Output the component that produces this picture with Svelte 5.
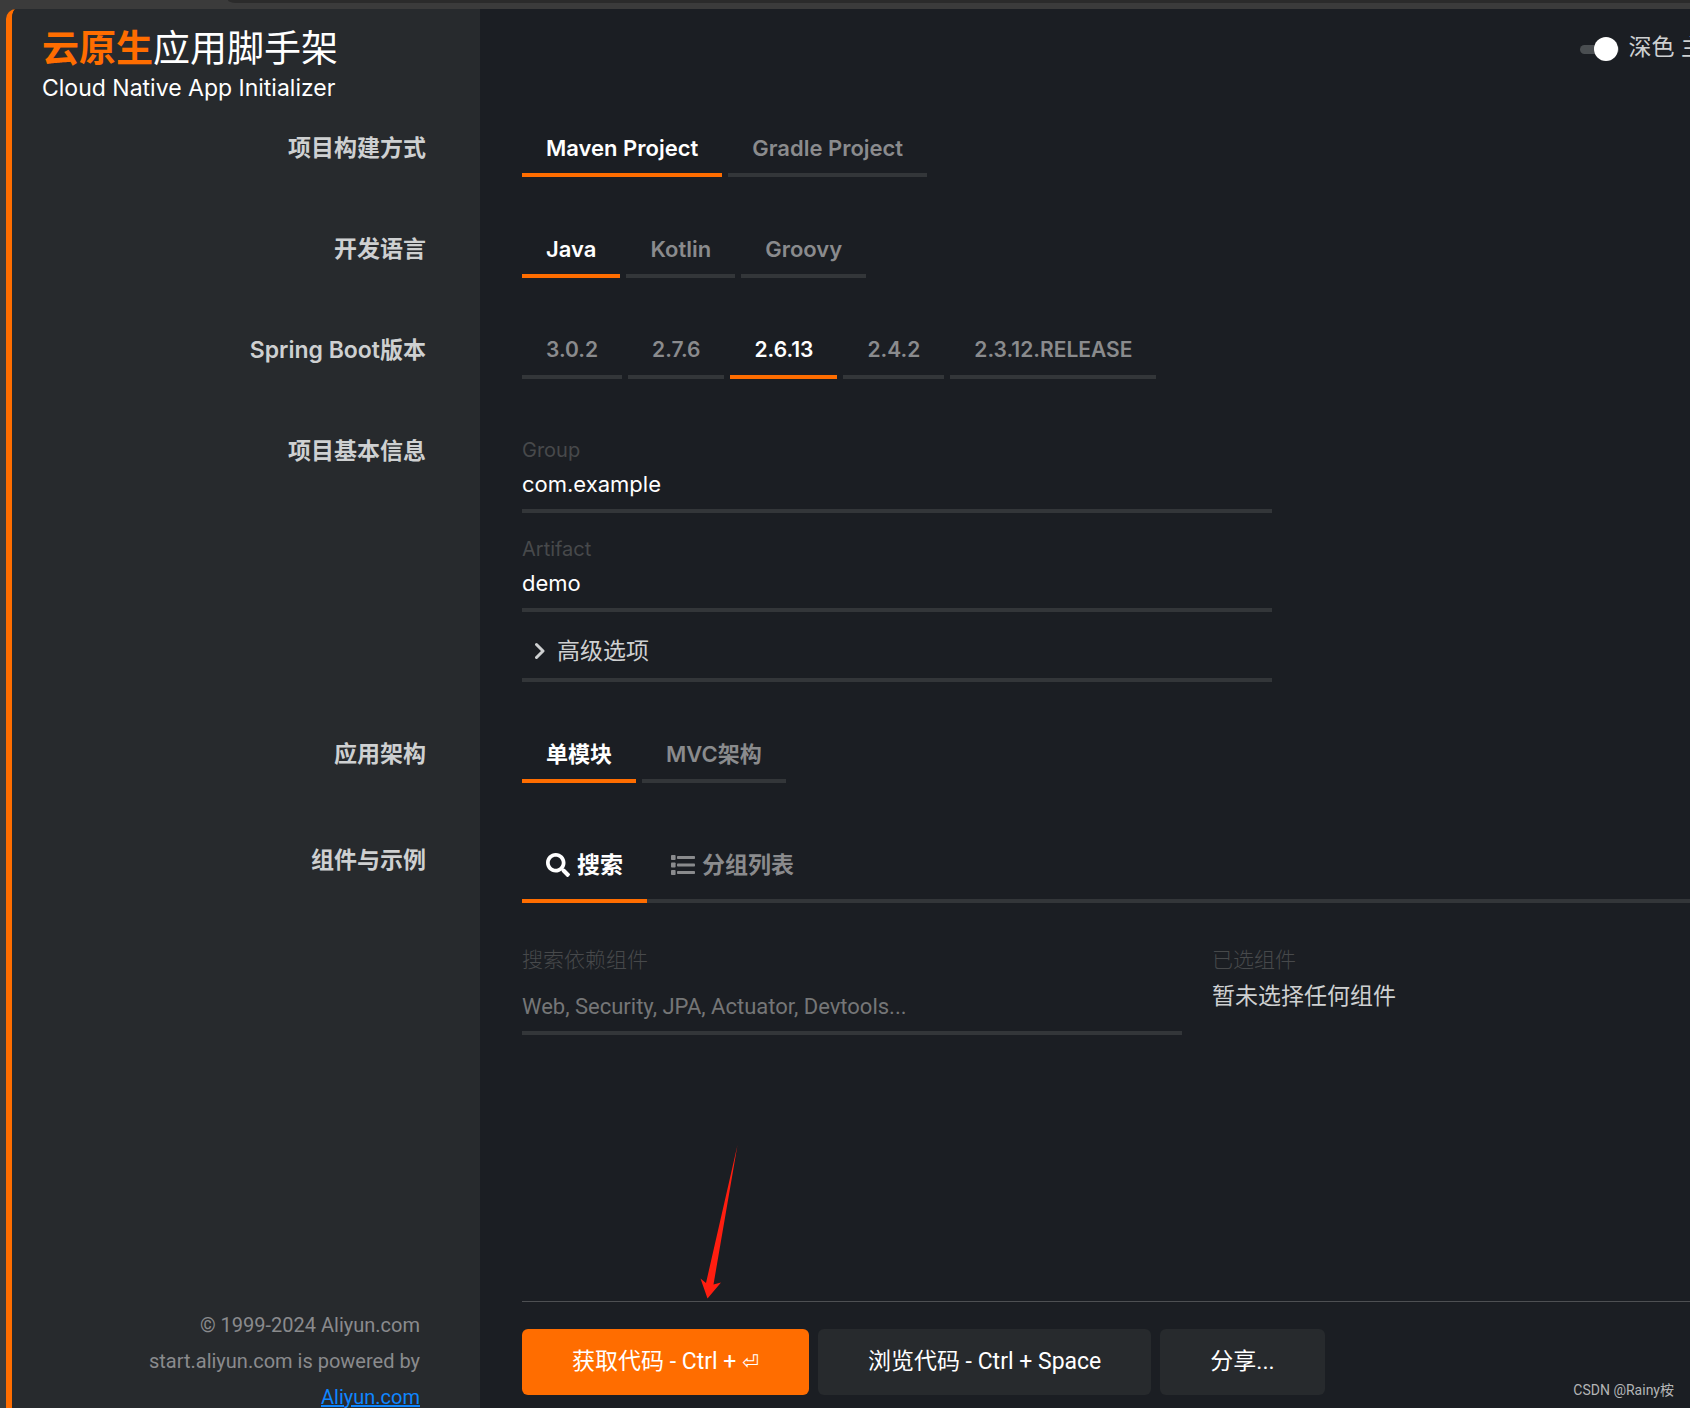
<script lang="ts">
	const projectTypes = ['Maven Project', 'Gradle Project'];
	const languages = ['Java', 'Kotlin', 'Groovy'];
	const versions = ['3.0.2', '2.7.6', '2.6.13', '2.4.2', '2.3.12.RELEASE'];
	const architectures = ['单模块', 'MVC架构'];

	let projectType = $state('Maven Project');
	let language = $state('Java');
	let version = $state('2.6.13');
	let architecture = $state('单模块');
	let view = $state('search');
	let group = $state('com.example');
	let artifact = $state('demo');
	let query = $state('');
	let dark = $state(true);
</script>

{#snippet choices(items: string[], current: string, pick: (v: string) => void)}
	<div class="choices">
		{#each items as item (item)}
			<button class="choice" class:active={item === current} onclick={() => pick(item)}>
				{item}
			</button>
		{/each}
	</div>
{/snippet}

<div class="page">
	<div class="browser-bar"><div class="browser-strip"></div></div>

	<div class="app">
		<header class="row">
			<div class="side brand">
				<h1><strong>云原生</strong>应用脚手架</h1>
				<p>Cloud Native App Initializer</p>
			</div>
			<div class="main top">
				<label class="theme">
					<input type="checkbox" bind:checked={dark} />
					<span>深色 主题</span>
				</label>
			</div>
		</header>

		<section class="row">
			<h2 class="side">项目构建方式</h2>
			<div class="main">
				{@render choices(projectTypes, projectType, (v) => (projectType = v))}
			</div>
		</section>

		<section class="row">
			<h2 class="side">开发语言</h2>
			<div class="main">
				{@render choices(languages, language, (v) => (language = v))}
			</div>
		</section>

		<section class="row">
			<h2 class="side">Spring Boot版本</h2>
			<div class="main versions">
				{@render choices(versions, version, (v) => (version = v))}
			</div>
		</section>

		<section class="row">
			<h2 class="side">项目基本信息</h2>
			<div class="main fields">
				<div class="field">
					<label for="group">Group</label>
					<input id="group" type="text" bind:value={group} />
				</div>
				<div class="field">
					<label for="artifact">Artifact</label>
					<input id="artifact" type="text" bind:value={artifact} />
				</div>
				<button class="advanced">
					<svg viewBox="0 0 10 18" width="10" height="18">
						<path d="M1.5 2.5 8 9l-6.5 6.5" />
					</svg>
					高级选项
				</button>
			</div>
		</section>

		<section class="row">
			<h2 class="side">应用架构</h2>
			<div class="main">
				{@render choices(architectures, architecture, (v) => (architecture = v))}
			</div>
		</section>

		<section class="row grow">
			<h2 class="side tall">组件与示例</h2>
			<div class="main flush">
				<div class="tabs">
					<button class="tab" class:active={view === 'search'} onclick={() => (view = 'search')}>
						<svg viewBox="0 0 512 512" width="24" height="24">
							<path
								d="M505 442.7L405.3 343c-4.5-4.5-10.6-7-17-7H372c27.6-35.3 44-79.7 44-128C416 93.1 322.9 0 208 0S0 93.1 0 208s93.1 208 208 208c48.3 0 92.7-16.4 128-44v16.3c0 6.4 2.5 12.5 7 17l99.7 99.7c9.4 9.4 24.6 9.4 33.9 0l28.3-28.3c9.4-9.4 9.4-24.6.1-34zM208 336c-70.7 0-128-57.2-128-128 0-70.7 57.2-128 128-128 70.7 0 128 57.2 128 128 0 70.7-57.2 128-128 128z"
							/>
						</svg>
						搜索
					</button>
					<button class="tab" class:active={view === 'list'} onclick={() => (view = 'list')}>
						<svg viewBox="0 0 24 24" width="24" height="24">
							{#each [2, 9.5, 17] as y (y)}
								<rect x="0" {y} width="4.6" height="5" rx="0.8" />
								<rect x="6" y={y + 1} width="18" height="3" rx="0.8" />
							{/each}
						</svg>
						分组列表
					</button>
				</div>

				<div class="panel">
					<div class="search">
						<label for="query">搜索依赖组件</label>
						<input
							id="query"
							type="text"
							placeholder="Web, Security, JPA, Actuator, Devtools..."
							bind:value={query}
						/>
					</div>
					<div class="selected">
						<h3>已选组件</h3>
						<p>暂未选择任何组件</p>
					</div>
				</div>
			</div>
		</section>

		<footer class="row">
			<div class="side credits">
				© 1999-2024 Aliyun.com<br />
				start.aliyun.com is powered by<br />
				<a href="#aliyun">Aliyun.com</a>
			</div>
			<div class="main flush">
				<div class="actions">
					<svg class="pointer" viewBox="0 0 38 154" width="38" height="154">
						<path d="M37.5 0 13.5 139.5 21 137.5 7.5 153.5 0.5 133.5 6 138Z" />
					</svg>
					<button class="action primary">获取代码 - Ctrl + <span class="key">⏎</span></button>
					<button class="action">浏览代码 - Ctrl + Space</button>
					<button class="action">分享...</button>
				</div>
			</div>
		</footer>
	</div>

	<div class="watermark">CSDN @Rainy桉</div>
</div>

<style>
	:global(body) {
		background: #3b3b3b;
	}

	.page {
		--orange: #ff6d00;
		--line: #333639;
		--panel: #272a2d;
		--muted: #8a8b8d;
		--narrow: Roboto, 'Noto Sans CJK SC', sans-serif;

		position: relative;
		display: flex;
		flex-direction: column;
		height: 100vh;
		overflow: hidden;
		font-family: Inter, 'Noto Sans CJK SC', sans-serif;
		font-size: 22px;
		color: #ced0d1;
	}

	.page :is(h1, h2, h3, p) {
		margin: 0;
		font-weight: 400;
	}

	button,
	input {
		margin: 0;
		padding: 0;
		border: 0;
		border-radius: 0;
		background: none;
		font: inherit;
		color: inherit;
		outline: none;
	}

	button {
		cursor: pointer;
		white-space: nowrap;
	}

	.browser-bar {
		flex: none;
		height: 9px;
	}

	.browser-strip {
		height: 3px;
		margin-left: 228px;
		border-bottom-left-radius: 8px 3px;
		background: #2b2b2b;
	}

	.app {
		flex: 1;
		display: flex;
		flex-direction: column;
		min-height: 0;
		margin-left: 6px;
		border-left: 6px solid var(--orange);
		border-top-left-radius: 10px;
		background: #1b1e23;
		overflow: hidden;
	}

	.row {
		flex: none;
		display: grid;
		grid-template-columns: 468px minmax(0, 1fr);
	}

	.row.grow {
		flex: 1;
	}

	.side {
		padding-right: 54px;
		background: var(--panel);
		text-align: right;
	}

	.page h2 {
		font-size: 23px;
		font-weight: 600;
		line-height: 34px;
	}

	.page h2.tall {
		line-height: 44px;
	}

	.main {
		padding: 0 42px 55px;
	}

	.main.flush {
		padding-right: 0;
		padding-bottom: 0;
	}

	.brand {
		height: 104px;
		padding: 18px 0 0 30px;
		text-align: left;
		color: #fff;
	}

	.brand h1 {
		font-size: 37px;
		line-height: 44px;
	}

	.brand strong {
		font-weight: 700;
		color: var(--orange);
	}

	.brand p {
		font-size: 23px;
		line-height: 34px;
	}

	.main.top {
		display: flex;
		justify-content: flex-end;
		align-items: flex-start;
		padding: 22px 0 0;
	}

	/* the caption runs past the right edge of the window */
	.theme {
		display: flex;
		align-items: center;
		gap: 10px;
		height: 36px;
		margin-right: -37px;
		font-size: 23px;
		line-height: 30px;
		white-space: nowrap;
	}

	.theme input {
		appearance: none;
		display: flex;
		align-items: center;
		width: 39px;
		height: 9px;
		border-radius: 5px;
		background: #4a4e51;
	}

	.theme input::before {
		content: '';
		width: 24px;
		height: 24px;
		border-radius: 50%;
		background: #fff;
	}

	.theme input:checked::before {
		margin-left: 14px;
	}

	.theme span {
		padding-bottom: 4px;
	}

	.choices {
		display: flex;
		gap: 6px;
	}

	.choice {
		padding: 0 24px 8px;
		border-bottom: 4px solid var(--line);
		font-weight: 600;
		line-height: 34px;
		color: var(--muted);
	}

	.versions {
		font-size: 21px;
	}

	.choice.active,
	.tab.active {
		border-color: var(--orange);
		color: #fff;
	}

	.fields {
		display: flex;
		flex-direction: column;
		gap: 20px;
		max-width: 750px;
	}

	.field,
	.search {
		display: flex;
		flex-direction: column;
	}

	.field label {
		font-size: 20px;
		line-height: 32px;
		color: #47494b;
	}

	.field input,
	.search input {
		height: 36px;
		padding-bottom: 7px;
		border-bottom: 4px solid var(--line);
		color: #fff;
	}

	.advanced {
		display: flex;
		align-items: center;
		gap: 12px;
		padding: 0 13px 8px;
		border-bottom: 4px solid var(--line);
		font-size: 23px;
		line-height: 38px;
	}

	.advanced path {
		fill: none;
		stroke: currentColor;
		stroke-width: 3;
		stroke-linecap: round;
		stroke-linejoin: round;
	}

	.tabs {
		display: flex;
		box-shadow: inset 0 -4px var(--line);
	}

	.tab {
		display: flex;
		align-items: center;
		gap: 7px;
		padding: 0 24px 7px;
		border-bottom: 4px solid transparent;
		font-size: 23px;
		font-weight: 700;
		line-height: 54px;
		color: var(--muted);
	}

	.tab svg {
		fill: currentColor;
	}

	.panel {
		display: grid;
		grid-template-columns: minmax(0, 660px) minmax(0, 1fr);
		gap: 30px;
		padding-top: 40px;
	}

	.search label,
	.page h3 {
		font-size: 21px;
		font-weight: 300;
		line-height: 34px;
		color: #47494b;
	}

	.search input {
		padding-top: 11px;
		font-family: var(--narrow);
	}

	.search input::placeholder {
		color: #757677;
		opacity: 1;
	}

	.selected p {
		font-size: 23px;
		line-height: 38px;
	}

	.credits {
		height: 101px;
		padding-top: 6px;
		padding-right: 60px;
		font-family: var(--narrow);
		font-size: 20px;
		line-height: 36px;
		color: var(--muted);
		overflow: hidden;
	}

	.credits a {
		color: #0f86ff;
	}

	.actions {
		position: relative;
		display: flex;
		gap: 9px;
		padding-top: 27px;
		border-top: 1px solid #4e5053;
	}

	.action {
		height: 66px;
		padding: 0 50px;
		border-radius: 6px;
		background: var(--panel);
		font-family: var(--narrow);
		font-size: 23px;
		line-height: 34px;
		color: #fff;
	}

	.action.primary {
		background: var(--orange);
	}

	.key {
		font-family: 'DejaVu Sans', sans-serif;
		font-size: 20px;
	}

	.pointer {
		position: absolute;
		left: 178px;
		bottom: 96px;
		fill: #ff1e10;
		pointer-events: none;
	}

	.watermark {
		position: absolute;
		right: 16px;
		bottom: 8px;
		font-family: var(--narrow);
		font-size: 14px;
		line-height: 20px;
		color: #b4b5b6;
	}
</style>
